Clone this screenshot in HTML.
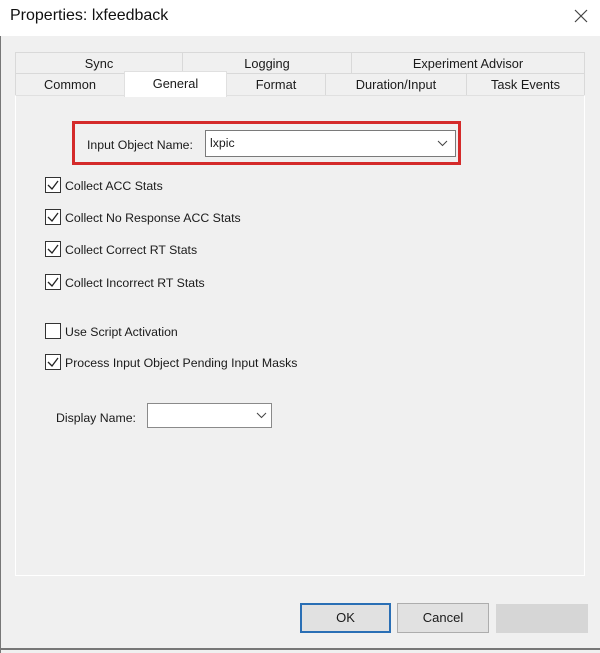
<!DOCTYPE html>
<html><head><style>
*{margin:0;padding:0;box-sizing:border-box}
body{width:600px;height:653px;background:#f0f0f0;font-family:"Liberation Sans","DejaVu Sans",sans-serif;font-size:12.3px;color:#1a1a1a;position:relative;overflow:hidden}
.a{position:absolute}
.title{left:0;top:0;width:600px;height:36px;background:#fff}
.tab{position:absolute;background:#f0f0f0;border:1px solid #d9d9d9;text-align:center;line-height:22px;font-size:12.8px}
.cb{position:absolute;left:45px;width:16px;height:16px;border:1px solid #333;background:#fff}
.lbl{position:absolute;left:65px}
.btn{position:absolute;top:603px;height:30px;border:1px solid #adadad;background:#e1e1e1;text-align:center;line-height:28px;font-size:13px}
</style></head><body>
<div class="a" style="left:0;top:0;width:1px;height:653px;background:#777"></div>
<div class="a" style="left:0;top:648px;width:600px;height:2px;background:#777"></div>
<div class="a title"></div>
<div class="a" style="left:10px;top:7px;font-size:16px;color:#111">Properties: lxfeedback</div>
<svg class="a" style="left:574px;top:9px" width="14" height="14"><path d="M1 1l12 12M13 1L1 13" stroke="#444" stroke-width="1.2"/></svg>

<div class="tab" style="left:15px;top:52px;width:168px;height:22px">Sync</div>
<div class="tab" style="left:182px;top:52px;width:170px;height:22px">Logging</div>
<div class="tab" style="left:351px;top:52px;width:234px;height:22px">Experiment Advisor</div>
<div class="tab" style="left:15px;top:73px;width:110px;height:23px">Common</div>
<div class="tab" style="left:226px;top:73px;width:100px;height:23px">Format</div>
<div class="tab" style="left:325px;top:73px;width:142px;height:23px">Duration/Input</div>
<div class="tab" style="left:466px;top:73px;width:119px;height:23px">Task Events</div>
<div class="a" style="left:15px;top:95px;width:570px;height:481px;border:1px solid #fff;border-top-color:#e0e0e0"></div>
<div class="tab" style="left:124px;top:71px;width:103px;height:26px;background:#fff;border-color:#e0e0e0;border-bottom:none;line-height:24px">General</div>

<div class="a" style="left:72px;top:121px;width:389px;height:44px;border:3px solid #d42a2a"></div>
<div class="a" style="left:87px;top:138px">Input Object Name:</div>
<div class="a" style="left:205px;top:130px;width:251px;height:27px;border:1px solid #7a7a7a;background:#fff"></div>
<div class="a" style="left:210px;top:136px">lxpic</div>
<svg class="a" style="left:437px;top:140px" width="11" height="7"><path d="M1 1l4.5 4.5L10 1" fill="none" stroke="#444"/></svg>

<div class="cb" style="top:177px"></div><div class="lbl" style="top:179px">Collect ACC Stats</div>
<div class="cb" style="top:209px"></div><div class="lbl" style="top:211px">Collect No Response ACC Stats</div>
<div class="cb" style="top:241px"></div><div class="lbl" style="top:243px">Collect Correct RT Stats</div>
<div class="cb" style="top:274px"></div><div class="lbl" style="top:276px">Collect Incorrect RT Stats</div>
<div class="cb" style="top:323px"></div><div class="lbl" style="top:325px">Use Script Activation</div>
<div class="cb" style="top:354px"></div><div class="lbl" style="top:356px">Process Input Object Pending Input Masks</div>
<svg class="a" style="left:45px;top:0" width="16" height="400" fill="none" stroke="#222" stroke-width="1.3">
<path d="M3 185l4 4 6-8"/><path d="M3 217l4 4 6-8"/><path d="M3 249l4 4 6-8"/><path d="M3 282l4 4 6-8"/><path d="M3 362l4 4 6-8"/></svg>

<div class="a" style="left:56px;top:411px">Display Name:</div>
<div class="a" style="left:147px;top:403px;width:125px;height:25px;border:1px solid #8a8a8a;background:#fff"></div>
<svg class="a" style="left:256px;top:412px" width="11" height="7"><path d="M1 1l4.5 4.5L10 1" fill="none" stroke="#444"/></svg>

<div class="btn" style="left:300px;width:91px;border:2px solid #2a6fb5;line-height:26px">OK</div>
<div class="btn" style="left:397px;width:92px">Cancel</div>
<div class="a" style="left:496px;top:604px;width:92px;height:29px;background:#d6d6d6"></div>
</body></html>
